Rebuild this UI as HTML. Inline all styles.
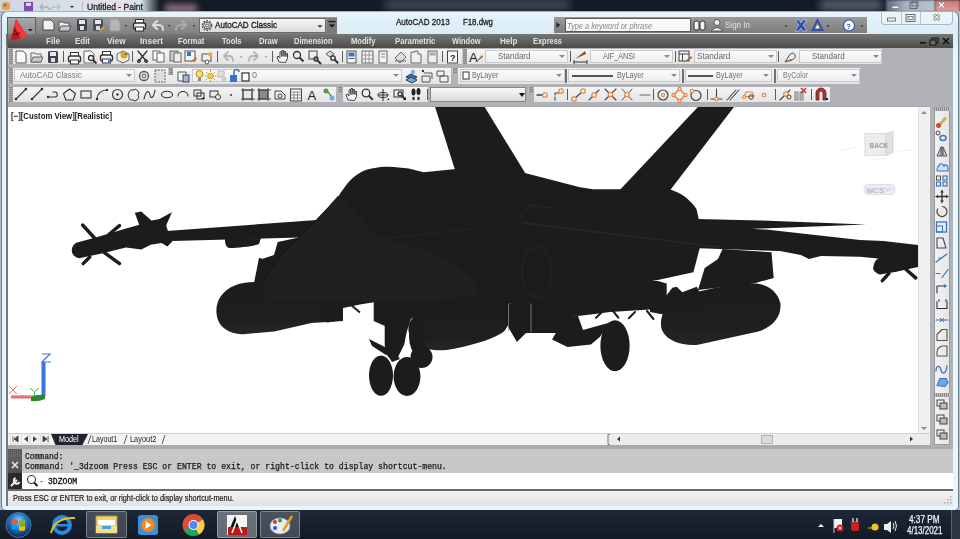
<!DOCTYPE html><html><head><meta charset="utf-8"><style>
*{margin:0;padding:0;box-sizing:border-box}
html,body{width:960px;height:539px;overflow:hidden;background:#131a26;font-family:"Liberation Sans",sans-serif;position:relative}
.a{position:absolute}
.t{position:absolute;white-space:nowrap;line-height:1}
.tb{position:absolute;background:linear-gradient(#f4f4f4,#e4e4e4);}
.grip{position:absolute;width:5px;background:repeating-linear-gradient(#8a8a8a 0 1px,#a8a8a8 1px 2px);border-left:1px solid #c8c8c8}
.dd{position:absolute;background:linear-gradient(#fbfbfb,#eeeeee);border:1px solid #c9c9c9;}
.arr{position:absolute;width:0;height:0;border-left:3px solid transparent;border-right:3px solid transparent;border-top:3px solid #8a8a8a}
</style></head><body>
<div class="a" style="left:0px;top:0px;width:960px;height:12px;background:#131a26;"></div>
<div class="a" style="left:0px;top:0px;width:160px;height:12px;background:linear-gradient(90deg,#cfd6df 0,#dfe3ea 60%,#e6e0e6 75%,#d8e4ea 88%,#131a26 100%);"></div>
<div class="a" style="left:165px;top:4px;width:32px;height:9px;background:#d9a8b8;filter:blur(3px);opacity:.6"></div>
<div class="a" style="left:385px;top:0px;width:185px;height:9px;background:#5d6678;filter:blur(4px);opacity:.7"></div>
<div class="a" style="left:820px;top:0px;width:62px;height:10px;background:#8a96a6;filter:blur(4px);opacity:.6"></div>
<div class="a" style="left:886px;top:0px;width:49px;height:12px;background:linear-gradient(90deg,#5a6a7e,#a8b4c2 40%,#b8c2cc);filter:blur(1px)"></div>
<div class="a" style="left:935px;top:0px;width:25px;height:12px;background:linear-gradient(#c87a7a,#dca09c);filter:blur(.8px)"></div>
<div class="t" style="left:86.5px;top:2.96px;font-size:8.8px;color:#1a1a1a;font-family:'Liberation Sans',sans-serif;transform:scaleX(0.970);transform-origin:0 0;-webkit-text-stroke:.3px #1a1a1a;">Untitled - Paint</div>
<div class="a" style="left:0px;top:11px;width:960px;height:500px;background:#b4c0cc;"></div>
<div class="a" style="left:1px;top:11px;width:958px;height:500px;background:#6f7a86;border-radius:6px 6px 5px 5px"></div>
<div class="a" style="left:2px;top:12px;width:956px;height:498px;background:linear-gradient(#e8f4fb,#d9ecf6 22px,#e4f7fa 40px,#e4f7fa);border-radius:5px 5px 4px 4px"></div>
<div class="a" style="left:6px;top:34px;width:947px;height:472px;background:#7a7a7a;"></div>
<div class="a" style="left:7px;top:17px;width:29px;height:29px;background:linear-gradient(#a8a8a8,#7a7a7a);border:1px solid #5e5e5e"></div>
<div class="a" style="left:36px;top:17px;width:301px;height:17px;background:linear-gradient(#9c9c9c,#7f7f7f);"></div>
<div class="a" style="left:199px;top:18px;width:127px;height:15px;background:linear-gradient(#f6f6f6,#dcdcdc);border:1px solid #6a6a6a"></div>
<div class="t" style="left:214.8px;top:20.17px;font-size:9.5px;color:#1e1e1e;font-family:'Liberation Sans',sans-serif;transform:scaleX(0.851);transform-origin:0 0;-webkit-text-stroke:.35px #1e1e1e;">AutoCAD Classic</div>
<div class="a" style="left:327px;top:18px;width:10px;height:15px;background:#7a7a7a;"></div>
<div class="t" style="left:396.3px;top:17.83px;font-size:9.2px;color:#1e1e1e;font-family:'Liberation Sans',sans-serif;transform:scaleX(0.875);transform-origin:0 0;-webkit-text-stroke:.3px #1e1e1e;">AutoCAD 2013</div>
<div class="t" style="left:463px;top:17.83px;font-size:9.2px;color:#1e1e1e;font-family:'Liberation Sans',sans-serif;transform:scaleX(0.850);transform-origin:0 0;-webkit-text-stroke:.3px #1e1e1e;">F18.dwg</div>
<div class="a" style="left:554px;top:17px;width:313px;height:16px;background:linear-gradient(#9a9a9a,#7c7c7c);"></div>
<div class="a" style="left:565px;top:18px;width:126px;height:14px;background:#f8f8f8;border:1px solid #5a5a5a"></div>
<div class="t" style="left:567px;top:22.49px;font-size:8.3px;color:#8a8a8a;font-family:'Liberation Sans',sans-serif;transform:scaleX(0.892);transform-origin:0 0;font-style:italic;">Type a keyword or phrase</div>
<div class="t" style="left:725px;top:21.33px;font-size:9.2px;color:#e4e4e4;font-family:'Liberation Sans',sans-serif;transform:scaleX(0.873);transform-origin:0 0;">Sign In</div>
<div class="a" style="left:881px;top:12px;width:72px;height:13px;background:rgba(255,255,255,.2);border:1px solid #a9b6c4;border-top:none;border-radius:0 0 4px 4px"></div>
<div class="a" style="left:8px;top:34px;width:945px;height:14px;background:linear-gradient(#777,#4a4a4a);"></div>
<div class="t" style="left:45.5px;top:36.86px;font-size:8.8px;color:#ececec;font-family:'Liberation Sans',sans-serif;transform:scaleX(0.924);transform-origin:0 0;font-weight:bold;opacity:.92;">File</div>
<div class="t" style="left:75px;top:36.86px;font-size:8.8px;color:#ececec;font-family:'Liberation Sans',sans-serif;transform:scaleX(0.902);transform-origin:0 0;font-weight:bold;opacity:.92;">Edit</div>
<div class="t" style="left:106.5px;top:36.86px;font-size:8.8px;color:#ececec;font-family:'Liberation Sans',sans-serif;transform:scaleX(0.930);transform-origin:0 0;font-weight:bold;opacity:.92;">View</div>
<div class="t" style="left:139.7px;top:36.86px;font-size:8.8px;color:#ececec;font-family:'Liberation Sans',sans-serif;transform:scaleX(0.960);transform-origin:0 0;font-weight:bold;opacity:.92;">Insert</div>
<div class="t" style="left:178.1px;top:36.86px;font-size:8.8px;color:#ececec;font-family:'Liberation Sans',sans-serif;transform:scaleX(0.882);transform-origin:0 0;font-weight:bold;opacity:.92;">Format</div>
<div class="t" style="left:222px;top:36.86px;font-size:8.8px;color:#ececec;font-family:'Liberation Sans',sans-serif;transform:scaleX(0.855);transform-origin:0 0;font-weight:bold;opacity:.92;">Tools</div>
<div class="t" style="left:258.75px;top:36.86px;font-size:8.8px;color:#ececec;font-family:'Liberation Sans',sans-serif;transform:scaleX(0.871);transform-origin:0 0;font-weight:bold;opacity:.92;">Draw</div>
<div class="t" style="left:294px;top:36.86px;font-size:8.8px;color:#ececec;font-family:'Liberation Sans',sans-serif;transform:scaleX(0.856);transform-origin:0 0;font-weight:bold;opacity:.92;">Dimension</div>
<div class="t" style="left:351px;top:36.86px;font-size:8.8px;color:#ececec;font-family:'Liberation Sans',sans-serif;transform:scaleX(0.864);transform-origin:0 0;font-weight:bold;opacity:.92;">Modify</div>
<div class="t" style="left:394.6px;top:36.86px;font-size:8.8px;color:#ececec;font-family:'Liberation Sans',sans-serif;transform:scaleX(0.890);transform-origin:0 0;font-weight:bold;opacity:.92;">Parametric</div>
<div class="t" style="left:451.7px;top:36.86px;font-size:8.8px;color:#ececec;font-family:'Liberation Sans',sans-serif;transform:scaleX(0.847);transform-origin:0 0;font-weight:bold;opacity:.92;">Window</div>
<div class="t" style="left:499.5px;top:36.86px;font-size:8.8px;color:#ececec;font-family:'Liberation Sans',sans-serif;transform:scaleX(0.918);transform-origin:0 0;font-weight:bold;opacity:.92;">Help</div>
<div class="t" style="left:533px;top:36.86px;font-size:8.8px;color:#ececec;font-family:'Liberation Sans',sans-serif;transform:scaleX(0.847);transform-origin:0 0;font-weight:bold;opacity:.92;">Express</div>
<div class="a" style="left:8px;top:48px;width:945px;height:58px;background:#b1b2b8;"></div>
<div class="tb" style="left:13px;top:49px;width:449px;height:15px"></div>
<div class="grip" style="left:8px;top:49px;height:15px"></div>
<div class="tb" style="left:467px;top:49px;width:415px;height:15px"></div>
<div class="grip" style="left:462px;top:49px;height:15px"></div>
<div class="dd" style="left:485px;top:50px;width:83px;height:13px"></div>
<div class="arr" style="left:559px;top:55px"></div>
<div class="t" style="left:497.5px;top:52.26px;font-size:8.8px;color:#666;font-family:'Liberation Sans',sans-serif;transform:scaleX(0.910);transform-origin:0 0;">Standard</div>
<div class="dd" style="left:590px;top:50px;width:83px;height:13px"></div>
<div class="arr" style="left:664px;top:55px"></div>
<div class="t" style="left:603px;top:52.26px;font-size:8.8px;color:#666;font-family:'Liberation Sans',sans-serif;transform:scaleX(0.818);transform-origin:0 0;">AIF_ANSI</div>
<div class="dd" style="left:694px;top:50px;width:83px;height:13px"></div>
<div class="arr" style="left:768px;top:55px"></div>
<div class="t" style="left:696.7px;top:52.26px;font-size:8.8px;color:#666;font-family:'Liberation Sans',sans-serif;transform:scaleX(0.932);transform-origin:0 0;">Standard</div>
<div class="dd" style="left:799px;top:50px;width:83px;height:13px"></div>
<div class="arr" style="left:873px;top:55px"></div>
<div class="t" style="left:812px;top:52.26px;font-size:8.8px;color:#666;font-family:'Liberation Sans',sans-serif;transform:scaleX(0.916);transform-origin:0 0;">Standard</div>
<div class="a" style="left:570px;top:51px;width:1px;height:11px;background:#5a5a5a;"></div>
<div class="a" style="left:675px;top:51px;width:1px;height:11px;background:#5a5a5a;"></div>
<div class="a" style="left:778px;top:51px;width:1px;height:11px;background:#5a5a5a;"></div>
<div class="a" style="left:63px;top:51px;width:1px;height:11px;background:#5a5a5a;"></div>
<div class="a" style="left:132px;top:51px;width:1px;height:11px;background:#5a5a5a;"></div>
<div class="a" style="left:217px;top:51px;width:1px;height:11px;background:#5a5a5a;"></div>
<div class="a" style="left:272px;top:51px;width:1px;height:11px;background:#5a5a5a;"></div>
<div class="a" style="left:342px;top:51px;width:1px;height:11px;background:#5a5a5a;"></div>
<div class="a" style="left:442px;top:51px;width:1px;height:11px;background:#5a5a5a;"></div>
<div class="tb" style="left:13px;top:68px;width:438px;height:16px"></div>
<div class="grip" style="left:8px;top:68px;height:16px"></div>
<div class="dd" style="left:14px;top:69px;width:121px;height:13px"></div>
<div class="arr" style="left:126px;top:74px"></div>
<div class="t" style="left:20px;top:71.39px;font-size:9px;color:#7a7a7a;font-family:'Liberation Sans',sans-serif;transform:scaleX(0.894);transform-origin:0 0;">AutoCAD Classic</div>
<div class="tb" style="left:175px;top:68px;width:276px;height:16px"></div>
<div class="grip" style="left:168px;top:68px;height:7px"></div>
<div class="dd" style="left:192px;top:69px;width:210px;height:13px"></div>
<div class="arr" style="left:393px;top:74px"></div>
<div class="t" style="left:251.7px;top:71.39px;font-size:9px;color:#777;font-family:'Liberation Sans',sans-serif;transform:scaleX(0.999);transform-origin:0 0;">0</div>
<div class="tb" style="left:458px;top:68px;width:402px;height:16px"></div>
<div class="grip" style="left:452px;top:68px;height:6px"></div>
<div class="dd" style="left:460px;top:69px;width:105px;height:13px"></div>
<div class="arr" style="left:556px;top:74px"></div>
<div class="t" style="left:471.7px;top:71.39px;font-size:9px;color:#6f6f6f;font-family:'Liberation Sans',sans-serif;transform:scaleX(0.797);transform-origin:0 0;">ByLayer</div>
<div class="dd" style="left:568px;top:69px;width:112px;height:13px"></div>
<div class="arr" style="left:671px;top:74px"></div>
<div class="t" style="left:616.7px;top:71.39px;font-size:9px;color:#6f6f6f;font-family:'Liberation Sans',sans-serif;transform:scaleX(0.806);transform-origin:0 0;">ByLayer</div>
<div class="a" style="left:572px;top:75px;width:41px;height:2px;background:#555;"></div>
<div class="dd" style="left:685px;top:69px;width:87px;height:13px"></div>
<div class="arr" style="left:763px;top:74px"></div>
<div class="t" style="left:715.8px;top:71.39px;font-size:9px;color:#6f6f6f;font-family:'Liberation Sans',sans-serif;transform:scaleX(0.809);transform-origin:0 0;">ByLayer</div>
<div class="a" style="left:688px;top:75px;width:25px;height:2px;background:#555;"></div>
<div class="dd" style="left:777px;top:69px;width:83px;height:13px"></div>
<div class="arr" style="left:851px;top:74px"></div>
<div class="t" style="left:783.3px;top:71.39px;font-size:9px;color:#7a7a7a;font-family:'Liberation Sans',sans-serif;transform:scaleX(0.781);transform-origin:0 0;">ByColor</div>
<div class="a" style="left:565px;top:69px;width:2px;height:14px;background:#707070;"></div>
<div class="a" style="left:682px;top:69px;width:2px;height:14px;background:#707070;"></div>
<div class="a" style="left:774px;top:69px;width:2px;height:14px;background:#707070;"></div>
<div class="tb" style="left:13px;top:87px;width:323px;height:15px"></div>
<div class="grip" style="left:8px;top:87px;height:15px"></div>
<div class="tb" style="left:343px;top:87px;width:85px;height:15px"></div>
<div class="grip" style="left:337px;top:87px;height:6px"></div>
<div class="a" style="left:430px;top:87px;width:96px;height:15px;background:linear-gradient(#fafafa,#d8d8d8);border:1px solid #888"></div>
<div class="a" style="left:519px;top:93px;width:0;height:0;border-left:3.5px solid transparent;border-right:3.5px solid transparent;border-top:4px solid #111"></div>
<div class="tb" style="left:534px;top:87px;width:296px;height:15px"></div>
<div class="grip" style="left:528px;top:87px;height:6px"></div>
<div class="a" style="left:567px;top:89px;width:1px;height:11px;background:#5a5a5a;"></div>
<div class="a" style="left:653px;top:89px;width:1px;height:11px;background:#5a5a5a;"></div>
<div class="a" style="left:707px;top:89px;width:1px;height:11px;background:#5a5a5a;"></div>
<div class="a" style="left:775px;top:89px;width:1px;height:11px;background:#5a5a5a;"></div>
<div class="a" style="left:811px;top:89px;width:1px;height:11px;background:#5a5a5a;"></div>
<div class="a" style="left:427px;top:89px;width:1px;height:11px;background:#5a5a5a;"></div>
<div class="a" style="left:8px;top:106px;width:924px;height:341px;background:#a9aaae;"></div>
<div class="a" style="left:8px;top:107px;width:910px;height:326px;background:#fff;"></div>
<div class="t" style="left:11.25px;top:111.89px;font-size:9px;color:#1a1a1a;font-family:'Liberation Sans',sans-serif;transform:scaleX(0.866);transform-origin:0 0;font-weight:bold;">[−][Custom View][Realistic]</div>
<div class="a" style="left:918px;top:107px;width:12px;height:326px;background:#f0f0f0;border-left:1px solid #e2e2e2"></div>
<div class="a" style="left:8px;top:433px;width:922px;height:12px;background:#f3f3f3;border-top:1px solid #d0d0d0"></div>
<div class="a" style="left:608px;top:434px;width:322px;height:11px;background:#ececec;"></div>
<div class="a" style="left:761px;top:435px;width:12px;height:9px;background:#dadada;border:1px solid #b0b0b0"></div>
<div class="a" style="left:51px;top:434px;width:37px;height:11px;background:#1e2530;clip-path:polygon(0 0,100% 0,85% 100%,12% 100%)"></div>
<div class="t" style="left:59px;top:435.19px;font-size:9px;color:#fff;font-family:'Liberation Sans',sans-serif;transform:scaleX(0.804);transform-origin:0 0;">Model</div>
<div class="t" style="left:91.9px;top:435.19px;font-size:9px;color:#222;font-family:'Liberation Sans',sans-serif;transform:scaleX(0.790);transform-origin:0 0;">Layout1</div>
<div class="t" style="left:130.3px;top:435.19px;font-size:9px;color:#222;font-family:'Liberation Sans',sans-serif;transform:scaleX(0.821);transform-origin:0 0;">Layout2</div>
<div class="a" style="left:930px;top:106px;width:23px;height:341px;background:#b1b2b8;"></div>
<div class="a" style="left:934px;top:107px;width:16px;height:338px;background:linear-gradient(90deg,#f2f2f2,#e6e6e6);border:1px solid #9a9a9a"></div>
<div class="a" style="left:934px;top:107px;width:16px;height:4px;background:repeating-linear-gradient(90deg,#888 0 1px,#c0c0c0 1px 2px);"></div>
<div class="a" style="left:934px;top:393px;width:16px;height:4px;background:repeating-linear-gradient(90deg,#888 0 1px,#c0c0c0 1px 2px);"></div>
<div class="a" style="left:8px;top:447px;width:945px;height:43px;background:#a9aaae;"></div>
<div class="a" style="left:8px;top:449px;width:14px;height:41px;background:linear-gradient(#6a6a6a,#3a3a3a);"></div>
<div class="a" style="left:22px;top:449px;width:931px;height:24px;background:#c8c8c8;"></div>
<div class="a" style="left:22px;top:473px;width:931px;height:16px;background:#fff;"></div>
<div class="a" style="left:8px;top:489px;width:945px;height:2px;background:#6a6a6a;"></div>
<div class="t" style="left:25px;top:452.93px;font-size:8.3px;color:#1a1a1a;font-family:'Liberation Mono',monospace;transform:scaleX(0.961);transform-origin:0 0;-webkit-text-stroke:.25px #1a1a1a;">Command:</div>
<div class="t" style="left:25px;top:463.43px;font-size:8.3px;color:#1a1a1a;font-family:'Liberation Mono',monospace;transform:scaleX(0.985);transform-origin:0 0;-webkit-text-stroke:.25px #1a1a1a;">Command: '_3dzoom Press ESC or ENTER to exit, or right-click to display shortcut-menu.</div>
<div class="t" style="left:48.3px;top:478.43px;font-size:8.3px;color:#111;font-family:'Liberation Mono',monospace;transform:scaleX(0.977);transform-origin:0 0;-webkit-text-stroke:.3px #111;">3DZOOM</div>
<div class="a" style="left:8px;top:491px;width:945px;height:15px;background:linear-gradient(#f4f4f4,#e2e2e2);"></div>
<div class="t" style="left:12.5px;top:493.69px;font-size:9px;color:#222;font-family:'Liberation Sans',sans-serif;transform:scaleX(0.816);transform-origin:0 0;-webkit-text-stroke:.2px #222;">Press ESC or ENTER to exit, or right-click to display shortcut-menu.</div>
<div class="a" style="left:0px;top:510px;width:960px;height:29px;background:linear-gradient(#1d2836,#121a26);"></div>
<div class="a" style="left:86px;top:511px;width:41px;height:27px;background:rgba(255,255,255,.18);border:1px solid rgba(255,255,255,.3);border-radius:2px"></div>
<div class="a" style="left:217px;top:511px;width:40px;height:27px;background:rgba(255,255,255,.35);border:1px solid rgba(255,255,255,.3);border-radius:2px"></div>
<div class="a" style="left:260px;top:511px;width:40px;height:27px;background:rgba(255,255,255,.2);border:1px solid rgba(255,255,255,.3);border-radius:2px"></div>
<div class="t" style="left:909px;top:515.05px;font-size:10px;color:#f4f6fa;font-family:'Liberation Sans',sans-serif;transform:scaleX(0.822);transform-origin:0 0;-webkit-text-stroke:.25px #f4f6fa;">4:37 PM</div>
<div class="t" style="left:906.5px;top:526.45px;font-size:10px;color:#f4f6fa;font-family:'Liberation Sans',sans-serif;transform:scaleX(0.798);transform-origin:0 0;-webkit-text-stroke:.25px #f4f6fa;">4/13/2021</div>
<div class="a" style="left:951px;top:510px;width:9px;height:29px;background:#2a3442;border-left:1px solid #56606e"></div>
<svg class="a" style="left:0;top:0" width="960" height="539" viewBox="0 0 960 539">
<defs><clipPath id="dc"><rect x="8" y="107" width="910" height="326"/></clipPath>
<linearGradient id="tk" x1="0" y1="0" x2="0" y2="1"><stop offset="0" stop-color="#1c1c1c"/><stop offset=".7" stop-color="#1f1f1f"/><stop offset="1" stop-color="#262626"/></linearGradient>
</defs>
<g clip-path="url(#dc)" fill="#1c1c1c" stroke="none">
<!-- left wing -->
<polygon points="166.4,230.9 324,219.5 332,212 334,238 300,237.5 172.8,241"/>
<path d="M225,239 L261,238 L259,244 C252,246.5 240,247.5 229,248 C226,247 225,244 225,239 Z"/>
<!-- left missile body -->
<path d="M79,242 L95.7,237.5 L126,228.6 L138.5,225 L150.6,220.7 L160,219 L165.4,223.5 L168,231 L172.8,241 L167.3,246.6 L161.7,243 L150.6,244.8 L141.3,249.4 L126,247.6 L101.6,253.5 L79,258.3 A8.2,8.2 0 0 1 79,242 Z"/>
<g stroke="#1c1c1c" stroke-linecap="round" fill="none" stroke-width="3.4">
<path d="M82.6,225 L94.5,238"/><path d="M119.5,225.6 L108.8,234.5"/><path d="M83.2,263.6 L89.8,257"/><path d="M119.5,263.6 L104,252.3"/>
</g>
<polygon points="134.8,212.8 141.3,211.4 153,222 140,227"/>
<polygon points="171.9,212.3 159.9,218.8 153,223 166,226"/>
<!-- fuselage main -->
<path d="M259,258 L262.8,258.7 L274,255 L277.7,242 L300,237.3 L324,219.7 L338.3,196.4 C344,188 348,182 353,177.8 C360,172 366,169.5 371.7,168.6 C378,167 383,166.7 388.4,166.7 C396,167 402,167.5 408.8,168.6 L423.6,172.3 L456,169 L525.8,173.3 L580,187.2 L593,189.3 L669.8,189.3 C677,192 681,194 686,197.4 C691,202 694,205 696.5,209 L698.8,219.5 L700,247 L693.4,272.2 L657.8,280 L652,280.6 L657.8,281 L666.7,283.4 L666.7,300 L666.5,308.6 L610,312 L598.7,313.4 L578,316 L540,312 L508,303 L438,303.4 L406.8,301 L373.4,302.3 L360,304.5 L343,308 L343,321 L300,320 L254,283 Z"/>
<!-- tail fins -->
<polygon points="434.8,106 484,106 527,176 456,173"/>
<polygon points="698.8,106 734.7,106 668,193 617,193"/>
<!-- left tank -->
<path fill="url(#tk)" d="M255,282 C238,282 228,287 221,296 C215,304 215,316 220,324 C226,332 236,335 246,334 L274.2,331.5 L311.4,323 L343,321 L343,300 Z"/>
<!-- stabilizer spike -->
<polygon points="698,219 760,220.4 866,224.5 760,228.6 698,232"/>
<!-- right wing -->
<polygon points="698,226 766,229.6 860,240 883.4,241.1 918,245 918,267 893.4,272.3 877.8,258.4 860,256.7 821,256 809,259 800.8,255 780,251 692,248"/>
<!-- right missile -->
<path d="M877.8,259 L905,262 L918,266 L893.4,272.3 L880,274.5 C875,273 872,269 873.4,266.7 C874,263 875.5,260 877.8,259 Z"/>
<g stroke="#1c1c1c" stroke-linecap="round" fill="none" stroke-width="3.4">
<path d="M882.3,280.7 L889,273.4"/><path d="M915.7,277.9 L905.6,269"/>
</g>
<!-- right pylon -->
<polygon points="722.5,249 771.5,252.3 773.7,277.9 753.7,283.5 698,290 704.7,267.9 718,259"/>
<!-- right tank -->
<path fill="url(#tk)" d="M686.8,294.6 C710,288 735,284 753.7,283.5 C765,283 778,291 780.4,303.5 C782,318 770,330 753.7,332.5 L698,344.7 C682,346 668,341 663,332 C657,322 664,300 686.8,294.6 Z"/>
<!-- center tank -->
<polygon points="430,300 509,300 509,326 430,318"/>
<path fill="url(#tk)" d="M430,310 C455,304 490,306 505,316 C510,320 509,330 500,334 C490,340 470,346 446.8,350 C425,352 410,344 408.4,330 C408,320 415,313 430,310 Z"/>
<!-- under fuselage block left -->
<polygon points="320,300 320,320 327.5,322.5 342.5,320 343,306 351,305 363.7,302.5 373.7,302 373.7,321 385,326 386,345 404,345 407,331 411,318.8 437.5,310 437.5,300"/>
<path d="M351,305 L360,312.5" stroke="#1c1c1c" stroke-width="2"/>
<!-- strut and wheels -->
<polygon points="384.7,318 404,318 406,303.75 409,304 404,345 398,357 388,357 384.7,345"/>
<path d="M369,339 L383,346 L392,352 L386,355 L372,346 Z"/>
<ellipse cx="381" cy="375.6" rx="12" ry="20.2"/>
<ellipse cx="407" cy="376.4" rx="13.4" ry="19.5"/>
<ellipse cx="421.5" cy="357" rx="11" ry="11"/>
<ellipse cx="417" cy="336" rx="8" ry="18"/>
<path d="M386,340 L400,359 L392,362 L384,350 Z"/>
<!-- under belly block center -->
<polygon points="507.8,303 507.8,326.4 516.9,342 526,332.9 555.8,332.9 552,339.4 567.5,347.1 591,344.5 600,336.75 610,322.5 591,327.7 583,330 578,316"/>
<!-- nose wheel -->
<ellipse cx="615" cy="345.7" rx="14.6" ry="25.5"/>
<!-- missile fins under belly -->
<g stroke="#1c1c1c" stroke-width="2" stroke-linecap="round">
<path d="M596,317.7 L603,311"/><path d="M618.4,317.7 L613,311"/><path d="M628.8,318.3 L635,312"/><path d="M653.5,319 L647,311"/>
</g>
<polygon points="650,297 666,297 666,315 650,312"/>
<polygon points="666,296 672.3,287.8 676.7,286.7 682.3,292.3 696.7,286.7 699,291 700,305 666,312"/>
<path fill="#202020" d="M338.3,196.4 C325,212 305,232 290,246 C275,262 263,278 262,290 C263,298 272,300 290,301 L360,302.6 L440,300 L480,294 C470,270 440,250 380,239 L338.3,196.4 Z"/>
<path d="M338.3,196.4 C325,212 305,232 290,246 C275,262 263,278 262,290" fill="none" stroke="#171717" stroke-width="1.2"/>
<path d="M380,239 L480,228.3" fill="none" stroke="#242424" stroke-width="1"/>
<g fill="none" stroke-linecap="round">
<path d="M523,223 L720,247" stroke="#282828" stroke-width="1.3"/>
<path d="M470,214 L523,223" stroke="#222" stroke-width="1"/>
<ellipse cx="537" cy="272" rx="15" ry="25" stroke="#242424" stroke-width="1.3"/>
<path d="M508.5,304 v27 M531,304 v28" stroke="#9a9a9a" stroke-width=".7"/>
<path d="M520,218 L530,205 L550,208" stroke="#2a2a2a" stroke-width="1"/>
</g>
</g>
</svg>

<svg class="a" style="left:0;top:0" width="960" height="539"><path d="M10.5,41 L16,19 L27.5,36.5 Z" fill="#c8181f"/><path d="M16,19 L27.5,36.5 L21,39 L15,27 Z" fill="#ee3a40"/><path d="M12.5,35 L20,33 M14.5,29 L18,36" stroke="#7a0a10" stroke-width="1.3"/>
<path d="M27.8,29.05 h5.0 l-2.5,2.5 z" fill="#222"/>
<path d="M43,20 h8 l3,3 v7 h-11 z" fill="#f2f2f2" stroke="#4a4a4a" stroke-width="1"/>
<path d="M59,22 h4 l1,1 h5 v8 h-10 z" fill="#f0f0f0" stroke="#555" stroke-width="1"/><path d="M59,31 l2,-5 h10 l-2,5 z" fill="#c9c9c9" stroke="#555" stroke-width="1"/>
<rect x="77" y="19" width="10" height="12" rx="1.5" fill="#3f4350"/><rect x="79" y="20" width="6" height="4" fill="#e8e8e8"/><rect x="80" y="26" width="4" height="4" fill="#e0e0e0"/>
<rect x="93" y="19" width="10" height="12" rx="1.5" fill="#4a4f5c"/><rect x="95" y="20" width="6" height="4" fill="#e8e8e8"/><rect x="96" y="26" width="4" height="4" fill="#e0e0e0"/>
<path d="M100,31 l4,-4" stroke="#e8a020" stroke-width="2"/>
<path d="M110,19 h7 l3,3 v9 h-10 z" fill="#b5b5b5" stroke="#9a9a9a" stroke-width="1"/>
<path d="M124.5,25.25 h3.0 l-1.5,1.5 z" fill="#333"/>
<rect x="135.5" y="19.5" width="8" height="4" fill="#fff" stroke="#2e2e2e"/><rect x="133.5" y="23" width="12" height="6" rx="2" fill="#f4f4f4" stroke="#2e2e2e" stroke-width="1.4"/><rect x="135.5" y="27" width="8" height="4" fill="#fff" stroke="#2e2e2e"/>
<path d="M153,25 l4,-4 M153,25 l4,4 M153,25 h6 c3,0 4,2 4,5" fill="none" stroke="#ddd" stroke-width="2" stroke-linecap="round" stroke-linejoin="round"/>
<path d="M167.5,25.25 h3.0 l-1.5,1.5 z" fill="#333"/>
<path d="M186,25 l-4,-4 M186,25 l-4,4 M186,25 h-6 c-3,0 -4,2 -4,5" fill="none" stroke="#aaa" stroke-width="2" stroke-linecap="round" stroke-linejoin="round"/>
<path d="M192.5,25.25 h3.0 l-1.5,1.5 z" fill="#333"/>
<circle cx="207" cy="25.5" r="4.6" fill="none" stroke="#555" stroke-width="1.6" stroke-dasharray="1.8,1.1"/>
<circle cx="207" cy="25.5" r="3.3" fill="none" stroke="#555" stroke-width="0.9"/>
<circle cx="207" cy="25.5" r="1.5" fill="none" stroke="#555" stroke-width="0.9"/>
<path d="M317.5,25.25 h5.0 l-2.5,2.5 z" fill="#333"/>
<path d="M329,24.5 h6 l-3,3 z" fill="#111"/>
<rect x="328.5" y="21" width="7" height="1.2" fill="#111"/>
<path d="M558,25.0 h0 l-0,0 z" fill="#222"/>
<path d="M556.5,22 l3.5,3 l-3.5,3 z" fill="#222"/>
<g fill="#f4f4f4" stroke="#333" stroke-width="1"><rect x="694" y="21" width="5" height="9" rx="2"/><rect x="700" y="21" width="5" height="9" rx="2"/></g>
<circle cx="717" cy="22.5" r="3" fill="#f0f0f0" stroke="#555"/><path d="M711,31 q6,-7 12,0 z" fill="#f0f0f0" stroke="#555"/>
<circle cx="786" cy="26" r="1" fill="#333"/>
<path d="M795,20 h4 l2,3 l2,-3 h4 l-4,5 l4,6 h-4 l-2,-3 l-2,3 h-4 l4,-6 z" fill="#2f4fa8" stroke="#c8d4f0" stroke-width=".6"/>
<path d="M817.5,20 l-5,10 h10 z" fill="none" stroke="#2f4fa8" stroke-width="1.8"/><circle cx="817.5" cy="27" r="1.5" fill="#fff"/>
<circle cx="828" cy="26" r="1" fill="#333"/>
<circle cx="849" cy="25.5" r="5.5" fill="#fff" stroke="#2f4fa8" stroke-width="1.2"/>
<text x="846" y="29" font-family="Liberation Sans" font-size="8" font-weight="bold" fill="#2f4fa8">?</text>
<circle cx="862" cy="26" r="1" fill="#333"/>
<rect x="887.5" y="18" width="8" height="3" fill="#f4f4f4" stroke="#6a6a6a" stroke-width=".9"/><rect x="906" y="14.5" width="9" height="7" fill="#f0f0f0" stroke="#6a6a6a" stroke-width="1"/><rect x="908" y="16.5" width="5" height="3" fill="none" stroke="#6a6a6a" stroke-width=".8"/><path d="M934,14.5 l5.5,5.5 M939.5,14.5 l-5.5,5.5" stroke="#6a6a6a" stroke-width="2.8"/><path d="M934,14.5 l5.5,5.5 M939.5,14.5 l-5.5,5.5" stroke="#f4f4f4" stroke-width="1.2"/>
<rect x="881" y="12" width="72" height="13" fill="none"/><line x1="901.5" y1="12" x2="901.5" y2="25" stroke="#b9c4d0"/><line x1="920.5" y1="12" x2="920.5" y2="25" stroke="#b9c4d0"/>
<rect x="24" y="2" width="9" height="9" fill="#7d4cb0"/><rect x="26" y="3" width="5" height="3" fill="#ddd"/>
<path d="M70,6.0 h4 l-2,2 z" fill="#222"/>
<rect x="0" y="11" width="960" height="1" fill="#9fb2c6"/>
<rect x="920" y="42" width="6" height="1.5" fill="#111"/><rect x="932" y="38" width="6" height="5" fill="none" stroke="#111"/><rect x="930" y="40" width="6" height="5" fill="#6a6a6a" stroke="#111"/><path d="M943,38 l6,6 M949,38 l-6,6" stroke="#111" stroke-width="1.5"/>
<path d="M16,51 h7 l3,3 v9 h-10 z" fill="#fafafa" stroke="#555" stroke-width="1"/>
<path d="M31,53 h4 l1,1 h5 v8 h-10 z" fill="#f0f0f0" stroke="#666" stroke-width="1"/><path d="M31,62 l2,-5 h10 l-2,5 z" fill="#c9c9c9" stroke="#666" stroke-width="1"/>
<rect x="48" y="51" width="10" height="12" rx="1.5" fill="#3f4350"/><rect x="50" y="52" width="6" height="4" fill="#e8e8e8"/><rect x="51" y="58" width="4" height="4" fill="#e0e0e0"/>
<rect x="70.5" y="52.5" width="8" height="4" fill="#fff" stroke="#333"/><rect x="68.5" y="56" width="12" height="6" rx="2" fill="#f4f4f4" stroke="#333" stroke-width="1.4"/><rect x="70.5" y="60" width="8" height="4" fill="#fff" stroke="#333"/>
<path d="M84,51 h7 l3,3 v9 h-10 z" fill="#fafafa" stroke="#666" stroke-width="1"/>
<circle cx="91" cy="58" r="2.5" fill="none" stroke="#333" stroke-width="1.3"/><line x1="92.75" y1="59.75" x2="96.5" y2="63.5" stroke="#333" stroke-width="2"/>
<rect x="102.5" y="51.5" width="8" height="4" fill="#fff" stroke="#333"/><rect x="100.5" y="55" width="12" height="6" rx="2" fill="#f4f4f4" stroke="#333" stroke-width="1.4"/><rect x="102.5" y="59" width="8" height="4" fill="#fff" stroke="#333"/>
<path d="M108,60 l4,1 l-4,2 z" fill="#3b73c4"/>
<path d="M117,54 l6,-3 l6,3 v6 l-6,3 l-6,-3 z" fill="#eee" stroke="#666"/><circle cx="124" cy="55" r="3.5" fill="#e8a030"/><path d="M124,55 l3.5,0 a3.5,3.5 0 0 0 -1,-2.5 z" fill="#2a8a40"/>
<path d="M138,51 l9,11 M147,51 l-9,11" fill="none" stroke="#333" stroke-width="1.4" stroke-linecap="round" stroke-linejoin="round"/>
<circle cx="139" cy="61" r="1.5" fill="none" stroke="#333" stroke-width="1"/>
<circle cx="146" cy="61" r="1.5" fill="none" stroke="#333" stroke-width="1"/>
<rect x="153" y="51" width="7" height="9" rx="0" fill="#fafafa" stroke="#666" stroke-width="1"/>
<rect x="157" y="53" width="7" height="9" rx="0" fill="#fafafa" stroke="#666" stroke-width="1"/>
<rect x="170" y="51" width="8" height="10" rx="0" fill="#ccc" stroke="#666" stroke-width="1"/>
<rect x="174" y="53" width="7" height="9" rx="0" fill="#eee" stroke="#666" stroke-width="1"/>
<rect x="185" y="51" width="10" height="10" fill="#f4f4f4" stroke="#555"/><rect x="187" y="52" width="4" height="4" fill="#3b73c4"/><path d="M190,62 l6,-5 l1,2 z" fill="#c86a20"/>
<rect x="202" y="54" width="9" height="7" fill="#eee" stroke="#555"/><circle cx="207" cy="62" r="2" fill="#fff" stroke="#555"/><path d="M210,51 l1,2 l2,0 l-1.5,1.5 l.5,2 l-2,-1 l-2,1 l.5,-2 l-1.5,-1.5 l2,0 z" fill="#f0b020"/>
<path d="M224,56 l4,-4 M224,56 l4,4 M224,56 h5 c3,0 4,2 4,5" fill="none" stroke="#b4b4b4" stroke-width="1.8" stroke-linecap="round" stroke-linejoin="round"/>
<path d="M239.5,56.25 h3.0 l-1.5,1.5 z" fill="#999"/>
<path d="M258,56 l-4,-4 M258,56 l-4,4 M258,56 h-5 c-3,0 -4,2 -4,5" fill="none" stroke="#b4b4b4" stroke-width="1.8" stroke-linecap="round" stroke-linejoin="round"/>
<path d="M264.5,56.25 h3.0 l-1.5,1.5 z" fill="#999"/>
<path d="M279,62 l-2,-5 l1,-1 l2,2 v-6 l1.5,-0.5 l0.5,5 v-6 l1.5,0 l0.5,6 v-5 l1.5,0 l0.5,5 v-3 l1.5,0 v5 l-2,4 z" fill="#fafafa" stroke="#333" stroke-width="0.9"/>
<circle cx="297" cy="55" r="3.5" fill="none" stroke="#333" stroke-width="1.3"/><line x1="299.45" y1="57.45" x2="303.5" y2="61.5" stroke="#333" stroke-width="2"/>
<rect x="309" y="51" width="8" height="8" rx="0" fill="none" stroke="#444" stroke-width="1"/>
<circle cx="316" cy="59" r="2" fill="none" stroke="#333" stroke-width="1.3"/><line x1="317.4" y1="60.4" x2="321" y2="64" stroke="#333" stroke-width="2"/>
<path d="M326,54 l4,-3 l4,3 l-4,3 z" fill="#ddd" stroke="#555"/>
<circle cx="333" cy="58" r="2.2" fill="none" stroke="#333" stroke-width="1.3"/><line x1="334.54" y1="59.54" x2="338.2" y2="63.2" stroke="#333" stroke-width="2"/>
<rect x="347" y="51" width="9" height="12" fill="#f4f4f4" stroke="#555"/><rect x="348.5" y="52.5" width="6" height="4" fill="#3b73c4"/><rect x="348.5" y="58" width="6" height="1" fill="#555"/>
<rect x="362" y="51" width="11" height="12" fill="#f4f4f4" stroke="#666"/><path d="M365.5,51 v12 M369,51 v12 M362,55 h11 M362,59 h11" stroke="#888" stroke-width=".8"/>
<rect x="379" y="51" width="8" height="12" fill="#f4f4f4" stroke="#666"/><path d="M381,54 h4 M381,57 h4" stroke="#888"/>
<path d="M395,58 l6,-6 l5,5 l-6,6 z" fill="#ddd" stroke="#666"/><path d="M395,61 h11" stroke="#666"/>
<path d="M411,52 h4 v-1 h3 v3 h3 v9 h-10 z" fill="#eee" stroke="#666"/>
<rect x="428" y="51" width="9" height="12" fill="#eee" stroke="#666"/><rect x="429.5" y="52.5" width="6" height="3" fill="#aaa"/>
<rect x="447.5" y="51" width="10" height="12" fill="#fafafa" stroke="#444"/>
<text x="450" y="61" font-family="Liberation Sans" font-size="9" font-weight="bold" fill="#222">?</text>
<text x="469" y="62" font-family="Liberation Sans" font-size="13" font-weight="normal" fill="#222">A</text>
<path d="M475,63 l7,-8 l1,2 z" fill="#b06020"/>
<path d="M575,59 l10,-8 l1,3 z" fill="#9a5020"/><path d="M574,62 h13 M574,60 v4 M587,60 v4" stroke="#333" stroke-width="1"/>
<rect x="679" y="51" width="10" height="10" fill="#f4f4f4" stroke="#444"/><path d="M679,54 h10 M682.5,54 v7" stroke="#444"/><path d="M683,63 l8,-7 l1,2 z" fill="#b06020"/>
<path d="M785,62 l4,-6 c1,-3 5,-4 6,-1 c1,3 -2,5 -5,5 z" fill="#f4f4f4" stroke="#444"/><path d="M786,62 l5,-3 l1,2 z" fill="#b06020"/>
<circle cx="144" cy="76" r="4.5" fill="none" stroke="#555" stroke-width="1.3"/>
<circle cx="144" cy="76" r="2" fill="none" stroke="#555" stroke-width="1"/>
<rect x="155" y="70" width="10" height="12" fill="#ddd" stroke="#666" stroke-dasharray="2,1"/>
<path d="M178,72 h8 v9 h-8 z" fill="#f4f4f4" stroke="#555"/><rect x="183" y="75" width="6" height="7" fill="#9ab8d8" stroke="#445"/>
<circle cx="199.5" cy="74" r="3.5" fill="#f8e060" stroke="#8a7a20" stroke-width=".8"/><rect x="198" y="78" width="3" height="3" fill="#888"/>
<circle cx="210.5" cy="76" r="2.8" fill="#f8d030" stroke="#8a7a20" stroke-width=".6"/><path d="M210.5,70 v2 M210.5,80 v2 M204.5,76 h2 M214.5,76 h2 M206,72 l1.5,1.5 M215,72 l-1.5,1.5 M206,80 l1.5,-1.5 M215,80 l-1.5,-1.5" stroke="#c8a020" stroke-width="1"/>
<rect x="218" y="71" width="6" height="6" fill="#ddd" stroke="#bbb"/><circle cx="224" cy="79" r="2.5" fill="#ccc"/>
<rect x="230" y="75" width="7" height="7" fill="#3b73c4"/><path d="M234,75 v-3 a2.5,2.5 0 0 1 5,0" fill="none" stroke="#3b73c4" stroke-width="1.5"/>
<rect x="242" y="73" width="7" height="8" rx="0" fill="#fff" stroke="#333" stroke-width="1.2"/>
<path d="M406,77 l5,-3 l6,3 l-5,3 z" fill="#3b73c4" stroke="#234"/><path d="M406,80 l5,-3 l6,3 l-5,3 z" fill="#7aa8d8" stroke="#234"/><circle cx="413" cy="72" r="2.2" fill="#9ad"/>
<path d="M422,76 h8 v6 h-8 z M424,73 h8 v6" fill="none" stroke="#555"/><circle cx="423" cy="71" r="1.2" fill="#333"/>
<path d="M437,71 h7 v5 h-7 z M440,76 h8 v6 h-8 z" fill="#f0f0f0" stroke="#555"/>
<rect x="463" y="72" width="6" height="7" rx="0" fill="#fff" stroke="#444" stroke-width="1.1"/>
<line x1="16" y1="99" x2="26" y2="89" stroke="#333" stroke-width="1.1"/>
<circle cx="16" cy="99" r="1.3" fill="#333"/><circle cx="26" cy="89" r="1.3" fill="#333"/>
<line x1="32" y1="99" x2="42" y2="89" stroke="#333" stroke-width="1.1"/>
<circle cx="32" cy="99" r="1.3" fill="#333"/><circle cx="42" cy="89" r="1.3" fill="#333"/>
<path d="M48,97 h7 c3,0 3,-5 0,-5 h-2" fill="none" stroke="#333" stroke-width="1.1" stroke-linecap="round" stroke-linejoin="round"/>
<circle cx="48" cy="97" r="1.2" fill="#333"/>
<path d="M69.5,89 l6,4.5 l-2.3,6.5 h-7.4 l-2.3,-6.5 z" fill="none" stroke="#333" stroke-width="1.1"/>
<rect x="81" y="91" width="10" height="7" fill="none" stroke="#333" stroke-width="1.1"/>
<path d="M97,99 c0,-5 4,-9 10,-9" fill="none" stroke="#333" stroke-width="1.1" stroke-linecap="round" stroke-linejoin="round"/>
<circle cx="97" cy="99" r="1.2" fill="#333"/>
<circle cx="107" cy="90" r="1.2" fill="#333"/>
<circle cx="117.5" cy="94.5" r="5" fill="none" stroke="#333" stroke-width="1.1"/>
<circle cx="117.5" cy="94.5" r="1.2" fill="#333"/>
<path d="M129,92 q1,-3 4,-2 q3,-2 5,1 q2,2 0,4 q2,3 -1,5 q-2,2 -4,0 q-3,1 -4,-2 q-2,-3 0,-6" fill="none" stroke="#333" stroke-width="1" stroke-linecap="round" stroke-linejoin="round"/>
<path d="M144,99 c2,-9 5,-9 6,-4 c1,5 4,2 5,-5" fill="none" stroke="#333" stroke-width="1.1" stroke-linecap="round" stroke-linejoin="round"/>
<ellipse cx="167" cy="94.5" rx="5.5" ry="3.2" fill="none" stroke="#333" stroke-width="1.1"/>
<path d="M178,96 c0,-6 10,-6 10,0" fill="none" stroke="#333" stroke-width="1.1" stroke-linecap="round" stroke-linejoin="round"/>
<rect x="194" y="90" width="7" height="6" fill="none" stroke="#333"/><rect x="197" y="93" width="7" height="6" fill="none" stroke="#333"/><path d="M201,99 l3,0 l0,-2 z" fill="#111"/>
<rect x="210" y="91" width="8" height="6" fill="none" stroke="#333"/><circle cx="218" cy="97" r="2.5" fill="#fafafa" stroke="#333"/>
<circle cx="231" cy="95" r="1" fill="#333"/>
<rect x="243" y="90" width="9" height="9" fill="#e8e8e8" stroke="#444"/><path d="M241,90 h14 M241,99 h14 M243,88 v13 M252,88 v13" stroke="#444" stroke-width=".9"/>
<rect x="259" y="90" width="9" height="9" fill="#8a8a8a" stroke="#444"/><path d="M257,90 h14 M257,99 h14 M259,88 v13 M268,88 v13" stroke="#444" stroke-width=".9"/>
<path d="M275,99 v-8 h6 l4,4 v4 z" fill="none" stroke="#444"/><circle cx="280" cy="96" r="2" fill="none" stroke="#444"/>
<rect x="290.5" y="89" width="11" height="12" fill="#f4f4f4" stroke="#444"/><path d="M290.5,92 h11 M290.5,95 h11 M290.5,98 h11 M294,92 v9 M297.5,92 v9" stroke="#777" stroke-width=".8"/>
<text x="307.5" y="100" font-family="Liberation Sans" font-size="13" font-weight="normal" fill="#222">A</text>
<circle cx="326" cy="91" r="2.5" fill="#5a9a40"/><circle cx="332" cy="98" r="2.5" fill="#6ab0e0"/><path d="M328,92 l3,4" stroke="#333"/>
<path d="M348,100 l-2,-5 l1,-1 l2,2 v-6 l1.5,-0.5 l0.5,5 v-6 l1.5,0 l0.5,6 v-5 l1.5,0 l0.5,5 v-3 l1.5,0 v5 l-2,4 z" fill="#fafafa" stroke="#333" stroke-width="0.9"/>
<circle cx="366" cy="93" r="3.8" fill="none" stroke="#333" stroke-width="1.3"/><line x1="368.66" y1="95.66" x2="372.8" y2="99.8" stroke="#333" stroke-width="2"/>
<path d="M383,89 v12 M378,95 h10" stroke="#333" stroke-width="1.1"/><ellipse cx="383" cy="95" rx="5" ry="2.5" fill="none" stroke="#333"/><path d="M387,100 l2,0 l0,-2 z" fill="#111"/>
<rect x="394" y="90" width="9" height="7" fill="none" stroke="#333"/>
<circle cx="400" cy="94" r="2" fill="none" stroke="#333" stroke-width="1.3"/><line x1="401.4" y1="95.4" x2="405" y2="99" stroke="#333" stroke-width="2"/>
<path d="M403,100 l3,0 l0,-3 z" fill="#111"/>
<ellipse cx="413.5" cy="92" rx="2" ry="3.5" fill="#222"/><ellipse cx="418.5" cy="91.5" rx="2" ry="3.5" fill="#222"/><rect x="412.5" y="97" width="2" height="3" fill="#222"/><rect x="417.5" y="97" width="2" height="3" fill="#222"/>
<path d="M537,95 h5" fill="none" stroke="#444" stroke-width="1.3" stroke-linecap="round" stroke-linejoin="round"/>
<circle cx="545" cy="95" r="2.3" fill="#f6e8dc" stroke="#e5803f" stroke-width="1.1"/>
<path d="M555,100 v-3 M555,95 v-2 h4" fill="none" stroke="#444" stroke-width="1.1" stroke-linecap="round" stroke-linejoin="round"/>
<circle cx="561" cy="91" r="2.3" fill="#f6e8dc" stroke="#e5803f" stroke-width="1.1"/>
<path d="M574,99 l9,-8" fill="none" stroke="#444" stroke-width="1.1" stroke-linecap="round" stroke-linejoin="round"/>
<circle cx="574" cy="99" r="2.3" fill="#f6e8dc" stroke="#e5803f" stroke-width="1.1"/>
<circle cx="583" cy="91" r="2.3" fill="#f6e8dc" stroke="#e5803f" stroke-width="1.1"/>
<path d="M589,100 l10,-10" fill="none" stroke="#444" stroke-width="1.1" stroke-linecap="round" stroke-linejoin="round"/>
<circle cx="594" cy="95" r="2.3" fill="#f6e8dc" stroke="#e5803f" stroke-width="1.1"/>
<path d="M605,89 l11,11 M616,89 l-11,11" fill="none" stroke="#444" stroke-width="1.1" stroke-linecap="round" stroke-linejoin="round"/>
<circle cx="610.5" cy="94.5" r="2.3" fill="#f6e8dc" stroke="#e5803f" stroke-width="1.1"/>
<path d="M622,89 l10,11 M632,89 l-10,11" fill="none" stroke="#555" stroke-width="1" stroke-linecap="round" stroke-linejoin="round"/>
<circle cx="627" cy="94.5" r="2.3" fill="#f6e8dc" stroke="#e5803f" stroke-width="1.1"/>
<path d="M640,95 h10" fill="none" stroke="#666" stroke-width="1.2" stroke-linecap="round" stroke-linejoin="round"/>
<circle cx="663" cy="95" r="5" fill="none" stroke="#444" stroke-width="1.2"/>
<circle cx="663" cy="95" r="1.5" fill="#f6e8dc" stroke="#e5803f" stroke-width="1.1"/>
<path d="M679.5,89 l6,6 l-6,6 l-6,-6 z" fill="none" stroke="#e5803f" stroke-width="1.3"/>
<circle cx="679.5" cy="89" r="1.6" fill="#f6e8dc" stroke="#e5803f" stroke-width="1.1"/>
<circle cx="685.5" cy="95" r="1.6" fill="#f6e8dc" stroke="#e5803f" stroke-width="1.1"/>
<circle cx="679.5" cy="101" r="1.6" fill="#f6e8dc" stroke="#e5803f" stroke-width="1.1"/>
<circle cx="673.5" cy="95" r="1.6" fill="#f6e8dc" stroke="#e5803f" stroke-width="1.1"/>
<circle cx="696" cy="95.5" r="5" fill="none" stroke="#444" stroke-width="1.2"/>
<circle cx="692" cy="91" r="1.8" fill="#f6e8dc" stroke="#e5803f" stroke-width="1.1"/>
<path d="M711,99 h11 M716.5,99 v-10" fill="none" stroke="#444" stroke-width="1.1" stroke-linecap="round" stroke-linejoin="round"/>
<circle cx="716.5" cy="99" r="1.8" fill="#f6e8dc" stroke="#e5803f" stroke-width="1.1"/>
<path d="M727,100 l9,-10 M730,100 l9,-10" fill="none" stroke="#444" stroke-width="1.1" stroke-linecap="round" stroke-linejoin="round"/>
<path d="M744,97 l2,-5 h6 l2,4 z" fill="none" stroke="#e5803f" stroke-width="1.1"/>
<circle cx="751" cy="97" r="2.2" fill="none" stroke="#444" stroke-width="1"/>
<circle cx="744" cy="97" r="1.5" fill="#f6e8dc" stroke="#e5803f" stroke-width="1.1"/>
<circle cx="764" cy="95" r="1.8" fill="#f6e8dc" stroke="#e5803f" stroke-width="1.1"/>
<path d="M780,100 l10,-10" fill="none" stroke="#444" stroke-width="1.1" stroke-linecap="round" stroke-linejoin="round"/>
<circle cx="786" cy="94" r="2.3" fill="#f6e8dc" stroke="#e5803f" stroke-width="1.1"/>
<circle cx="789" cy="97" r="2" fill="none" stroke="#444" stroke-width="1"/>
<rect x="795" y="92" width="3" height="8" fill="#bbb" stroke="#888"/><rect x="800" y="92" width="3" height="8" fill="#bbb" stroke="#888"/><path d="M801,88 l5,5 M806,88 l-5,5" stroke="#d03030" stroke-width="1.5"/>
<path d="M816,100 v-7 a5,5 0 0 1 10,0 v7 h-3 v-7 a2,2 0 0 0 -4,0 v7 z" fill="#a83838" stroke="#6a1a1a" stroke-width=".8"/><rect x="826" y="98" width="2" height="2" fill="#222"/>
<path d="M938,126.5 l8,-9" stroke="#c8b060" stroke-width="3"/><circle cx="938.5" cy="125.5" r="2.5" fill="#c85020"/>
<circle cx="938" cy="133" r="2" fill="none" stroke="#444" stroke-width="1"/>
<ellipse cx="943" cy="138" rx="3" ry="2.5" fill="none" stroke="#3b73c4" stroke-width="1.4"/>
<path d="M942,146 v11 M941,147 l-4,9 h4 z M943,147 l4,9 h-4 z" fill="#ccc" stroke="#445" stroke-width=".9"/>
<path d="M937,171 h11 v-3 c0,-3 -3,-4 -4,-2 c-1,-3 -5,-3 -5,0 c-2,0 -2,3 -2,5" fill="#cfe0f4" stroke="#3b73c4" stroke-width="1.1"/>
<rect x="936.5" y="176" width="4" height="4" fill="none" stroke="#555"/><rect x="943" y="176" width="4" height="4" fill="none" stroke="#3b73c4" stroke-width="1.2"/><rect x="936.5" y="182" width="4" height="4" fill="none" stroke="#3b73c4" stroke-width="1.2"/><rect x="943" y="182" width="4" height="4" fill="none" stroke="#3b73c4" stroke-width="1.2"/>
<path d="M936,196.5 h12 M942,190.5 v12" fill="none" stroke="#333" stroke-width="1.3" stroke-linecap="round" stroke-linejoin="round"/>
<path d="M936,196.5 l2,-2 v4 z M948,196.5 l-2,-2 v4 z M942,190.5 l-2,2 h4 z M942,202.5 l-2,-2 h4 z" fill="#333"/>
<path d="M938,208.5 a5,5 0 1 0 4,-2" fill="none" stroke="#444" stroke-width="1.2"/>
<rect x="936.5" y="222" width="10" height="10" fill="none" stroke="#3b73c4" stroke-width="1.3"/><rect x="936.5" y="226" width="6" height="6" fill="none" stroke="#3b73c4" stroke-width="1"/>
<path d="M937,248 v-10 h6 l3,10 z" fill="none" stroke="#445" stroke-width="1.1"/>
<path d="M936,262 l11,-8 M939,258 h3" fill="none" stroke="#3a6fc2" stroke-width="1.2" stroke-linecap="round" stroke-linejoin="round"/>
<path d="M936,273.5 h4 M942,277.5 l6,-8" fill="none" stroke="#3a6fc2" stroke-width="1.2" stroke-linecap="round" stroke-linejoin="round"/>
<path d="M937,293 v-7 h9" fill="none" stroke="#333" stroke-width="1.1" stroke-linecap="round" stroke-linejoin="round"/>
<path d="M947,286 l-3,-2 v4 z" fill="#3b73c4"/>
<path d="M937,301.5 v7 h10 v-7" fill="none" stroke="#333" stroke-width="1.1" stroke-linecap="round" stroke-linejoin="round"/>
<rect x="938" y="299.5" width="2" height="2" fill="#3b73c4"/><rect x="945" y="299.5" width="2" height="2" fill="#3b73c4"/>
<path d="M936,320 h12" fill="none" stroke="#3a6fc2" stroke-width="1.2" stroke-linecap="round" stroke-linejoin="round"/>
<path d="M940,318 l2,2 l-2,2 M944,318 l-2,2 l2,2" fill="none" stroke="#3b73c4"/>
<path d="M937,340.5 v-6 l5,-5 h5 v11 z" fill="none" stroke="#555" stroke-width="1.1" stroke-linecap="round" stroke-linejoin="round"/>
<path d="M937,356 v-4 a6,6 0 0 1 6,-6 h4 v10 z" fill="none" stroke="#555" stroke-width="1.1" stroke-linecap="round" stroke-linejoin="round"/>
<path d="M936,371 c0,-6 4,-6 5,-1 c1,5 5,4 6,-4" fill="none" stroke="#3a6fc2" stroke-width="1.3" stroke-linecap="round" stroke-linejoin="round"/>
<path d="M937,385.5 l3,-7 h6 l2,4 l-3,4 z" fill="#6aa8e0" stroke="#3b73c4" stroke-width="1.1"/>
<rect x="937" y="400" width="7" height="6" fill="#f0f0f0" stroke="#444"/><rect x="940" y="403" width="7" height="6" fill="#bbb" stroke="#444"/>
<rect x="937" y="415" width="7" height="6" fill="#f0f0f0" stroke="#444"/><rect x="940" y="418" width="7" height="6" fill="#bbb" stroke="#444"/>
<rect x="937" y="430" width="7" height="6" fill="#f0f0f0" stroke="#444"/><rect x="940" y="433" width="7" height="6" fill="#bbb" stroke="#444"/><g opacity="1">
<path d="M840,151 L856,147 M870,160 L885,158 M897,151 L912,150" stroke="#eeeeee" stroke-width="1.2"/>
<rect x="865" y="133.5" width="21" height="22" fill="#ececec" stroke="#dcdcdc"/>
<path d="M886,133.5 L893,131.5 L893,152 L886,155.5 Z" fill="#e2e2e2" stroke="#d4d4d4"/>
<text x="869.5" y="148" font-family="Liberation Sans" font-size="6.5" font-weight="bold" fill="#9a9a9a" transform="scale(1,1)">BACK</text>
<rect x="864" y="184.5" width="31" height="10" rx="4" fill="#eceaf2" stroke="#e0dee8"/>
<text x="866.5" y="192.5" font-family="Liberation Sans" font-size="7.5" fill="#a8a8b0">WCS</text>
<path d="M885,188 l3,3 l3,-3" fill="none" stroke="#c0c0c8" stroke-width="1"/>
</g>
<path d="M921,114 l3,-3 l3,3 z" fill="#8a8a8a"/>
<path d="M921,427 l3,3 l3,-3 z" fill="#8a8a8a"/>
<path d="M620,436.5 l-3,2.5 l3,2.5 z" fill="#333"/>
<path d="M910,436.5 l3,2.5 l-3,2.5 z" fill="#333"/>
<path d="M610,434.5 h-2 v10 h2" fill="none" stroke="#777" stroke-width="1"/>
<rect x="41.5" y="362" width="4" height="34" fill="#3a78d8"/>
<rect x="11" y="395" width="31" height="3.5" fill="#e07070"/><rect x="11" y="395" width="31" height="1.2" fill="#f0a0a0"/>
<path d="M42,354 h8 l-8,8 h9" fill="none" stroke="#3a78d8" stroke-width="1.2"/>
<path d="M9,386 l8,8 M17,386 l-8,8" stroke="#f07080" stroke-width="1"/>
<path d="M30,388 l4.5,4 l4.5,-4 M34.5,392 v3" fill="none" stroke="#4ab04a" stroke-width="1"/>
<path d="M31,397 q7,-3 14,-2 v4 q-7,3 -14,2 z" fill="#2a8a2a"/>
<rect x="10.5" y="434" width="8" height="10" fill="#f4f4f4" stroke="#d4d4d4" stroke-width=".6"/>
<rect x="21.5" y="434" width="8" height="10" fill="#f4f4f4" stroke="#d4d4d4" stroke-width=".6"/>
<rect x="30.5" y="434" width="8" height="10" fill="#f4f4f4" stroke="#d4d4d4" stroke-width=".6"/>
<rect x="40.5" y="434" width="8" height="10" fill="#f4f4f4" stroke="#d4d4d4" stroke-width=".6"/>
<path d="M13,436 v6 M18,436 l-4,3 l4,3 z" fill="#444" stroke="#444" stroke-width=".8"/>
<path d="M28,436 l-4,3 l4,3 z" fill="#444"/>
<path d="M33,436 l4,3 l-4,3 z" fill="#444"/>
<path d="M43,436 l4,3 l-4,3 z M48,436 v6" fill="#444" stroke="#444" stroke-width=".8"/>
<path d="M88,444 l3,-9 M124,444 l3,-9 M162,444 l3,-9" stroke="#333" stroke-width=".8"/>
<rect x="8" y="449" width="14" height="6" fill="#5a5a5a"/>
<path d="M9,450.5 h12 M9,452.5 h12 M9,454.5 h12" stroke="#7c7c7c" stroke-width=".8" stroke-dasharray="1,1"/>
<path d="M12,462 l6,6 M18,462 l-6,6" stroke="#e8e8e8" stroke-width="1.6"/>
<rect x="8" y="473" width="14" height="16" fill="#2a2a2a"/>
<path d="M11,486 l6,-6 M15.5,478 a3,3 0 1 0 4,4" stroke="#eee" stroke-width="2" fill="none"/>
<circle cx="31.5" cy="479.5" r="4" fill="none" stroke="#444" stroke-width="1.2"/><path d="M34,482.5 l3.5,3.5" stroke="#222" stroke-width="2"/>
<path d="M40,481 h3 l-1.5,1.5 z" fill="#666"/>
<rect x="950" y="496" width="1.5" height="1.5" fill="#b0b0b0"/>
<rect x="950" y="499" width="1.5" height="1.5" fill="#b0b0b0"/>
<rect x="947" y="499" width="1.5" height="1.5" fill="#b0b0b0"/>
<rect x="950" y="502" width="1.5" height="1.5" fill="#b0b0b0"/>
<rect x="947" y="502" width="1.5" height="1.5" fill="#b0b0b0"/>
<rect x="944" y="502" width="1.5" height="1.5" fill="#b0b0b0"/>
<path d="M40,7 l3,-3 M40,7 l3,3 M40,7 h6 c2,0 3,1 3,3" fill="none" stroke="#a8b0bc" stroke-width="1.5"/><path d="M60,7 l-3,-3 M60,7 l-3,3 M60,7 h-6 c-2,0 -3,1 -3,3" fill="none" stroke="#b8c0cc" stroke-width="1.5"/>
<rect x="82" y="1" width="1" height="10" fill="#b8bcc8"/>
<rect x="2" y="2" width="8" height="8" rx="3" fill="#f0a040"/><circle cx="5" cy="5" r="1.5" fill="#3a80d0"/>
<rect x="892" y="6" width="7" height="2.5" fill="#f0f0f0" stroke="#778" stroke-width=".7"/>
<rect x="910" y="2.5" width="7" height="6" fill="none" stroke="#667" stroke-width="1"/><rect x="912" y="1" width="6" height="5" fill="none" stroke="#667" stroke-width=".8"/>
<path d="M939,2.5 l5,5 M944,2.5 l-5,5" stroke="#888" stroke-width="2.6"/><path d="M939,2.5 l5,5 M944,2.5 l-5,5" stroke="#fafafa" stroke-width="1.2"/>
<defs><radialGradient id="orb" cx=".5" cy=".35" r=".6"><stop offset="0" stop-color="#9ad4f8"/><stop offset=".5" stop-color="#2a7ac8"/><stop offset="1" stop-color="#0a3060"/></radialGradient></defs>
<circle cx="18.5" cy="525" r="12.5" fill="url(#orb)" stroke="#4a7aa8" stroke-width="1"/>
<path d="M12,520 q3,-2 6,0 v4.5 q-3,-2 -6,0 z" fill="#f05a28"/><path d="M19,520 q3,2 6,0 v4.5 q-3,2 -6,0 z" fill="#7cbb00"/><path d="M12,525.5 q3,-2 6,0 v4.5 q-3,-2 -6,0 z" fill="#00a1f1"/><path d="M19,525.5 q3,2 6,0 v4.5 q-3,2 -6,0 z" fill="#ffbb00"/>
<circle cx="62" cy="525" r="8" fill="none" stroke="#2a8ae0" stroke-width="4"/><rect x="56" y="524" width="12" height="2.5" fill="#2a8ae0"/><path d="M51,533 q4,-16 24,-15" fill="none" stroke="#f0c020" stroke-width="2"/>
<rect x="96" y="516" width="21" height="17" fill="#f0d070" stroke="#b89030"/><rect x="98" y="520" width="17" height="5" fill="#fff"/><rect x="96" y="526" width="21" height="7" fill="#f4dc90"/><rect x="102" y="526" width="9" height="3" fill="#4aa0e0"/>
<rect x="138" y="515" width="20" height="20" rx="3" fill="#3a90d8"/><circle cx="148" cy="525" r="7" fill="#f08a20"/><path d="M145.5,521 l6,4 l-6,4 z" fill="#fff"/>
<circle cx="193.5" cy="525" r="11" fill="#dd4b39"/><path d="M193.5,525 L184,530.5 A11,11 0 0 0 199,534.5 Z" fill="#1da462"/><path d="M193.5,525 L199,534.5 A11,11 0 0 0 203,519.5 Z" fill="#ffcd46"/><circle cx="193.5" cy="525" r="5" fill="#fff"/><circle cx="193.5" cy="525" r="4" fill="#4a8af4"/>
<rect x="227" y="515" width="20" height="20" fill="#f4f4f4"/><path d="M228,533 l7,-17 l7,17 z" fill="#111"/><rect x="228" y="527" width="19" height="8" fill="#c01818"/><path d="M232,533 l5,-13 l5,13" fill="none" stroke="#fff" stroke-width="1.5"/>
<ellipse cx="280" cy="526" rx="10" ry="8" fill="#e8eef4" stroke="#8aa0b8"/><circle cx="275" cy="522" r="2" fill="#e03030"/><circle cx="280" cy="520.5" r="2" fill="#30a030"/><circle cx="275" cy="528" r="2" fill="#3050e0"/><path d="M283,531 l9,-15" stroke="#e0a020" stroke-width="2.5"/>
<path d="M818,527 l3,-3 l3,3 z" fill="#fff"/>
<rect x="834" y="519" width="8" height="9" fill="#f4f4f4"/><path d="M834,519 v14" stroke="#ccc"/><circle cx="840" cy="528" r="3.5" fill="#d02020"/><path d="M838.5,526.5 l3,3 M841.5,526.5 l-3,3" stroke="#fff" stroke-width=".9"/>
<rect x="851" y="521" width="8" height="10" rx="2" fill="#c82020"/><path d="M853,518 v4 M857,518 v4" stroke="#eee" stroke-width="1.2"/>
<path d="M868,528 h6" stroke="#c8a020" stroke-width="1.2"/><circle cx="875" cy="527" r="3.5" fill="#f8c020"/>
<path d="M884,524 h3 l4,-3 v12 l-4,-3 h-3 z" fill="#eee"/><path d="M893,523 q2,3 0,6 M895,521 q3,5 0,10" fill="none" stroke="#eee" stroke-width="1"/></svg>
</body></html>
